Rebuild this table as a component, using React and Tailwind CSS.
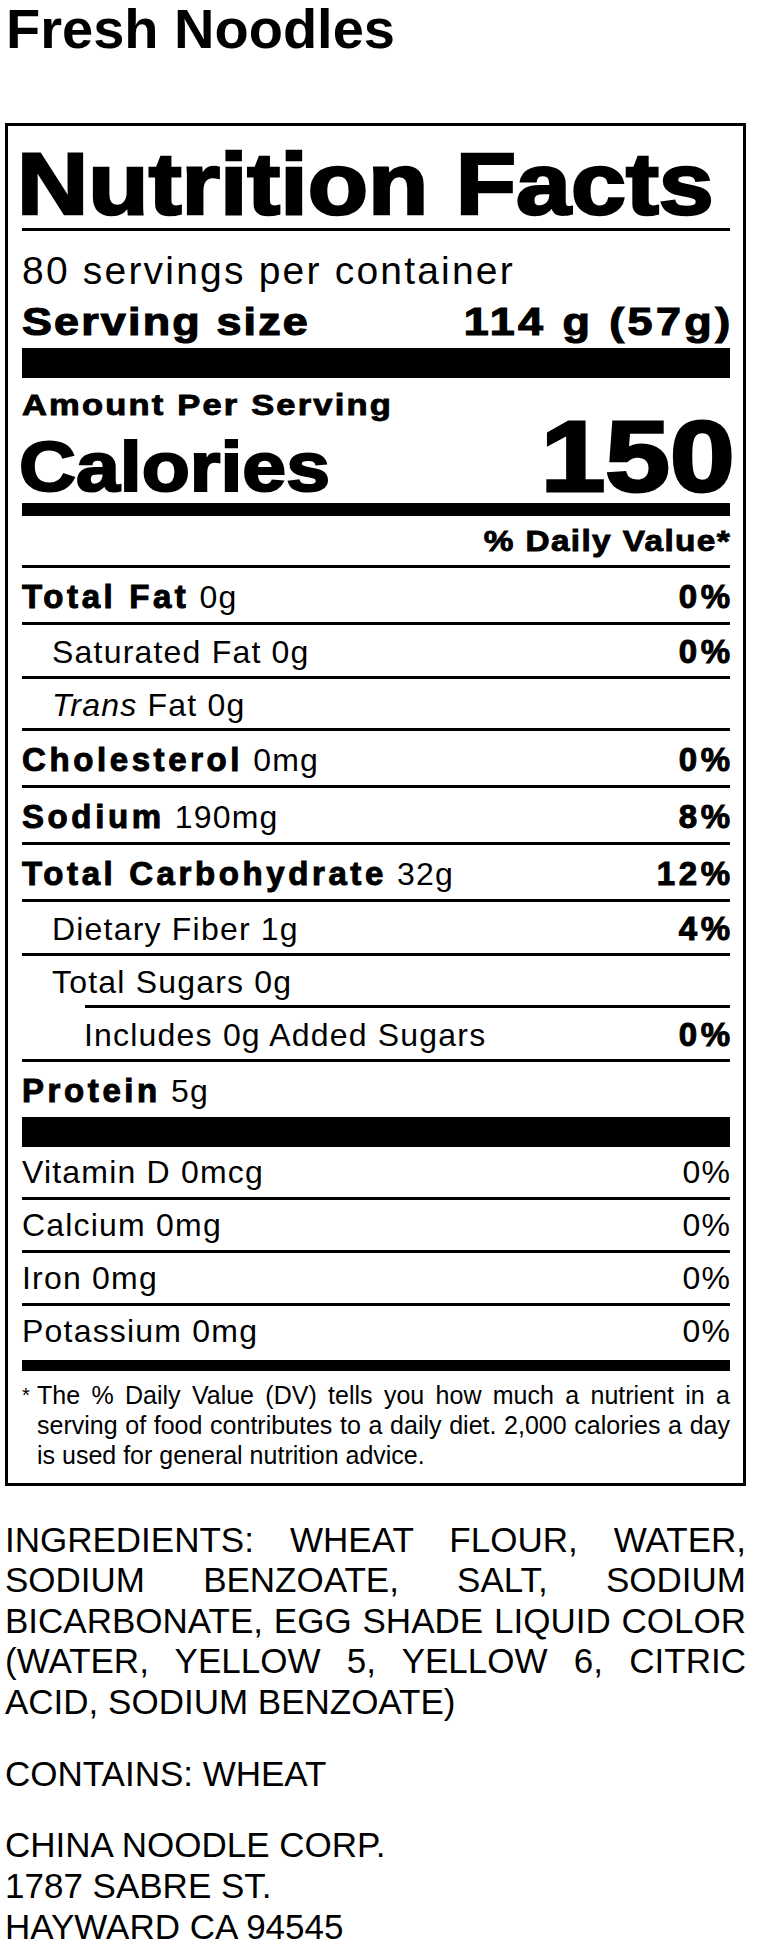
import React from 'react';

// heavy "black" weight used on the label headings
const heavy = 'font-bold [-webkit-text-stroke:0.03em]';
const boldLabel = 'text-[33px] tracking-[3.6px] font-bold [-webkit-text-stroke:0.03em]';
const regular = 'text-[32px] tracking-[1.2px]';

function MainRow({ label, amount, dv, border = true }) {
    return (
        <div className={border ? 'flex items-baseline justify-between border-b-[3px] border-black pt-[4px] leading-[49px]' : 'flex items-baseline justify-between pt-[4px] leading-[49px]'}>
            <span className={regular}>
                <span className={boldLabel}>{label}</span> {amount}
            </span>
            {dv && <span className={`${boldLabel} -mr-[3.6px]`}>{dv}</span>}
        </div>
    );
}

function SubRow({ children, dv, indent = 'pl-[30px]', border = true }) {
    return (
        <div className={border ? `flex items-baseline justify-between border-b-[3px] border-black pt-[4px] leading-[45.5px] ${indent}` : `flex items-baseline justify-between pt-[4px] leading-[45.5px] ${indent}`}>
            <span className={regular}>{children}</span>
            {dv && <span className={`${boldLabel} -mr-[3.6px]`}>{dv}</span>}
        </div>
    );
}

function VitaminRow({ label, dv, border = true }) {
    return (
        <div className={border ? 'flex items-baseline justify-between border-b-[3px] border-black leading-[50px]' : 'flex items-baseline justify-between leading-[50px]'}>
            <span className={regular}>{label}</span>
            <span className={`${regular} -mr-[1.2px]`}>{dv}</span>
        </div>
    );
}

export default function App() {
    return (
        <div className="min-h-[1950px] bg-white pl-[5px] font-['Liberation_Sans',Arial,sans-serif] text-black">
            <div className="w-[741px]">
                <h1 className="ml-[1px] text-[56px] font-bold leading-[58px]">Fresh Noodles</h1>

                {/* Nutrition label */}
                <div className="mt-[65px] border-[3px] border-black pb-[13px] pl-[14px] pr-[13px] pt-[14px]">
                    <div className="flex border-b-[3px] border-black pb-[1px]">
                        <span className={`-ml-[5px] origin-left scale-x-[1.135] text-[87px] leading-[87px] ${heavy}`}>Nutrition Facts</span>
                    </div>

                    <div className="mt-[14px] text-[39px] leading-[51px] tracking-[2.2px]">80 servings per container</div>
                    <div className="flex items-baseline justify-between text-[39px] leading-[51px]">
                        <span className={`origin-left scale-x-[1.15] tracking-[1.9px] ${heavy}`}>Serving size</span>
                        <span className={`-mr-[3.5px] origin-right scale-x-[1.15] tracking-[3px] ${heavy}`}>114 g (57g)</span>
                    </div>
                    <div className="mt-[1px] h-[30px] bg-black"></div>

                    <div className="mt-[12px] flex text-[30px] leading-[30px]">
                        <span className={`origin-left scale-x-[1.15] tracking-[1.9px] ${heavy}`}>Amount Per Serving</span>
                    </div>
                    <div className="flex items-baseline justify-between leading-[72px]">
                        <span className={`-ml-[3px] origin-left scale-x-[1.126] text-[70px] ${heavy}`}>Calories</span>
                        <span className={`-mr-[5px] origin-right scale-x-[1.15] text-[101px] ${heavy}`}>150</span>
                    </div>
                    <div className="h-[13px] bg-black"></div>

                    <div className="flex justify-end border-b-[3px] border-black pt-[1px] text-[29px] leading-[48px]">
                        <span className={`-mr-[1.4px] origin-right scale-x-[1.15] tracking-[1.2px] ${heavy}`}>% Daily Value*</span>
                    </div>

                    <MainRow label="Total Fat" amount="0g" dv="0%" />
                    <SubRow dv="0%">Saturated Fat 0g</SubRow>
                    <SubRow><i>Trans</i> Fat 0g</SubRow>
                    <MainRow label="Cholesterol" amount="0mg" dv="0%" />
                    <MainRow label="Sodium" amount="190mg" dv="8%" />
                    <MainRow label="Total Carbohydrate" amount="32g" dv="12%" />
                    <SubRow dv="4%">Dietary Fiber 1g</SubRow>
                    <SubRow border={false}>Total Sugars 0g</SubRow>
                    <div className="ml-[63px] h-[3px] bg-black"></div>
                    <SubRow dv="0%" indent="pl-[62px]">Includes 0g Added Sugars</SubRow>
                    <MainRow label="Protein" amount="5g" border={false} />
                    <div className="mt-[1px] h-[30px] bg-black"></div>

                    <VitaminRow label="Vitamin D 0mcg" dv="0%" />
                    <VitaminRow label="Calcium 0mg" dv="0%" />
                    <VitaminRow label="Iron 0mg" dv="0%" />
                    <VitaminRow label="Potassium 0mg" dv="0%" border={false} />
                    <div className="mt-[4px] h-[11px] bg-black"></div>

                    <div className="mt-[9px] flex text-[25px] leading-[30px]">
                        <span className="w-[15px] shrink-0 text-[20px]">*</span>
                        <p className="flex-1 text-justify">
                            The % Daily Value (DV) tells you how much a nutrient in a serving of food contributes to a daily diet. 2,000 calories a day is used for general nutrition advice.
                        </p>
                    </div>
                </div>

                {/* Ingredients & company */}
                <p className="mt-[34px] text-justify text-[35px] leading-[40.5px]">
                    INGREDIENTS: WHEAT FLOUR, WATER, SODIUM BENZOATE, SALT, SODIUM BICARBONATE, EGG SHADE LIQUID COLOR (WATER, YELLOW 5, YELLOW 6, CITRIC ACID, SODIUM BENZOATE)
                </p>
                <p className="mt-[32px] text-[35px] leading-[40px]">CONTAINS: WHEAT</p>
                <div className="mt-[30px] text-[35px] leading-[41px]">
                    <p>CHINA NOODLE CORP.</p>
                    <p>1787 SABRE ST.</p>
                    <p>HAYWARD CA 94545</p>
                </div>
            </div>
        </div>
    );
}
